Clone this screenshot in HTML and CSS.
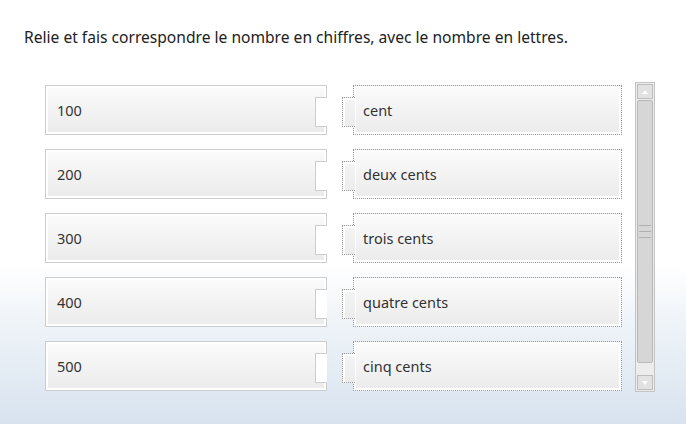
FILE: index.html
```html
<!DOCTYPE html>
<html lang="fr">
<head>
    <meta charset="UTF-8">
    <title>Relie</title>
    <link rel="stylesheet" href="styles.css">
</head>
<body>
    <p class="consigne">Relie et fais correspondre le nombre en chiffres, avec le nombre en lettres.</p>
    <div class="zone">
        <div class="lignes">
            <div class="ligne">
                <div class="chiffre">100</div>
                <div class="lettre">cent</div>
            </div>
            <div class="ligne">
                <div class="chiffre">200</div>
                <div class="lettre">deux cents</div>
            </div>
            <div class="ligne">
                <div class="chiffre">300</div>
                <div class="lettre">trois cents</div>
            </div>
            <div class="ligne">
                <div class="chiffre">400</div>
                <div class="lettre">quatre cents</div>
            </div>
            <div class="ligne">
                <div class="chiffre">500</div>
                <div class="lettre">cinq cents</div>
            </div>
        </div>
        <div class="defil">
            <div class="bouton"><span class="fleche haut"></span></div>
            <div class="curseur">
                <div class="prise"></div>
            </div>
            <div class="rail"></div>
            <div class="bouton"><span class="fleche bas"></span></div>
        </div>
    </div>
</body>
</html>
```

FILE: styles.css
```css
* {
    margin: 0;
    padding: 0;
    box-sizing: border-box;
}
html, body {
    height: 100%;
}
body {
    width: 686px;
    height: 424px;
    overflow: hidden;
    font-family: "Noto Sans", "Open Sans", sans-serif;
    color: #333;
    background: linear-gradient(to bottom, #ffffff 0, #ffffff 265px, #eef3f8 325px, #d8e3ef 424px);
}
.consigne {
    padding: 26px 0 0 24px;
    font-size: 15.6px;
    color: #222;
    height: 82px;
}
.zone {
    display: flex;
    padding-left: 45px;
}
.lignes {
    display: flex;
    flex-direction: column;
    gap: 14px;
    padding-top: 3px;
}
.ligne {
    display: flex;
    height: 50px;
}
.chiffre {
    position: relative;
    width: 282px;
    height: 50px;
    border: 1px solid #cdcdcd;
    box-shadow: inset 0 0 0 2px #ffffff;
    background: linear-gradient(to bottom, #fbfbfb, #ebebeb);
    font-size: 14.5px;
    line-height: 49px;
    padding-left: 11px;
}
.chiffre::after {
    content: "";
    position: absolute;
    right: -1px;
    top: 11px;
    width: 11px;
    height: 28px;
    background: #ffffff;
    border: 1px solid #cdcdcd;
    border-right: none;
}
.lettre {
    position: relative;
    margin-left: 26px;
    width: 269px;
    height: 50px;
    border: 1px dotted #9a9a9a;
    box-shadow: inset 0 0 0 2px #ffffff;
    background: linear-gradient(to bottom, #fbfbfb, #ebebeb);
    font-size: 14.5px;
    line-height: 49px;
    padding-left: 9px;
}
.lettre::before {
    content: "";
    position: absolute;
    left: -12px;
    top: 11px;
    width: 12px;
    height: 28px;
    border: 1px dotted #9a9a9a;
    border-right: none;
    box-shadow: inset 2px 2px 0 #ffffff;
    background: linear-gradient(to bottom, #f4f4f4, #ececec);
}
.defil {
    margin: 0 0 0 13px;
    width: 20px;
    height: 310px;
    border: 1px solid #c4c4c4;
    background: #ececec;
    display: flex;
    flex-direction: column;
    padding: 1px;
}
.bouton {
    height: 15px;
    border: 1px solid #bdbdbd;
    background: #e2e2e2;
    display: flex;
    justify-content: center;
    align-items: center;
}
.fleche {
    width: 0;
    height: 0;
    border-left: 3px solid transparent;
    border-right: 3px solid transparent;
}
.fleche.haut {
    border-bottom: 4px solid #ffffff;
}
.fleche.bas {
    border-top: 4px solid #ffffff;
}
.curseur {
    margin-top: 1px;
    height: 263px;
    border: 1px solid #b8b8b8;
    border-radius: 2px;
    background: #d6d6d6;
    display: flex;
    justify-content: center;
    align-items: center;
}
.prise {
    width: 12px;
    height: 13px;
    border-top: 1px solid #b0b0b0;
    border-bottom: 1px solid #b0b0b0;
    background: linear-gradient(to bottom, transparent 5px, #b0b0b0 5px, #b0b0b0 6px, transparent 6px);
}
.rail {
    flex: 1;
}
```
